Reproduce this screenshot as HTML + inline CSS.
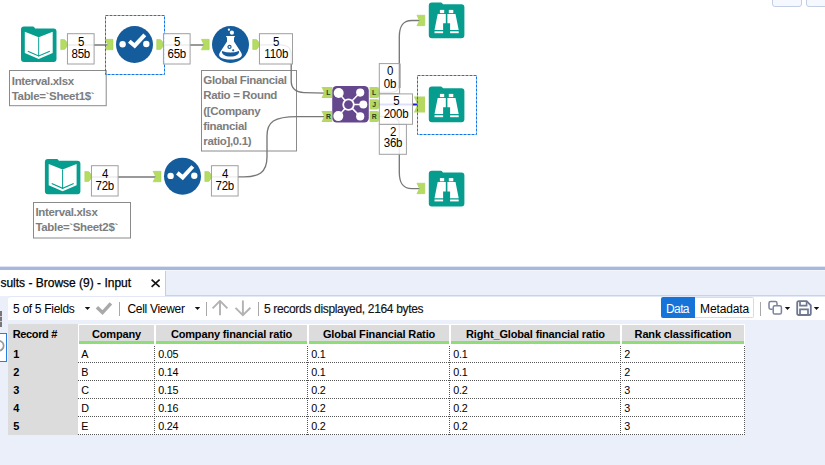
<!DOCTYPE html>
<html><head><meta charset="utf-8"><title>Workflow</title>
<style>
html,body{margin:0;padding:0;}
body{width:825px;height:465px;overflow:hidden;background:#fff;position:relative;font-family:"Liberation Sans",sans-serif;}
#canvas{position:absolute;left:0;top:0;width:825px;height:267px;}
#canvas text{font-family:"Liberation Sans",sans-serif;}
.lbl{font-size:11.5px;fill:#000;text-anchor:middle;letter-spacing:-0.25px;}
.ann{font-size:11.5px;font-weight:bold;fill:#7d7d7d;letter-spacing:-0.35px;}
.anc{font-size:6.8px;font-weight:bold;fill:#23402a;text-anchor:middle;}
#panel{position:absolute;left:0;top:266px;width:825px;height:199px;background:#eaeffa;}
.abs{position:absolute;}
.tb{font-size:12px;color:#000;white-space:nowrap;line-height:14px;}
.hd{position:absolute;top:59px;height:16px;background:#dcdcdc;border-bottom:3px solid #8fdd78;font-weight:bold;font-size:11px;letter-spacing:-0.15px;text-align:center;line-height:19px;color:#000;white-space:nowrap;}
.cell{position:absolute;height:18px;font-size:10.75px;line-height:20px;color:#000;letter-spacing:-0.2px;white-space:nowrap;}
.rn{position:absolute;left:13.3px;font-weight:bold;font-size:11px;line-height:20px;color:#000;}
.rh{font-weight:bold;font-size:11px;letter-spacing:-0.35px;line-height:15px;color:#000;white-space:nowrap;}
.vd{position:absolute;top:80px;width:1px;height:89px;background:repeating-linear-gradient(180deg,#555 0 1px,transparent 1px 2px);}
.hdot{position:absolute;left:78px;width:667px;height:1px;background:repeating-linear-gradient(90deg,#555 0 1px,transparent 1px 2px);}
</style></head><body>
<svg id="canvas" width="825" height="267" viewBox="0 0 825 267">
<defs>
<g id="book">
<path d="M0,3.6 Q0,0.6 3,0.6 H11.6 Q13,0.6 13.5,1.6 L14,2.5 H32.5 Q35.5,2.5 35.5,5.5 V33 Q35.5,36 32.5,36 H3 Q0,36 0,33 Z" fill="#069d8e"/>
<path d="M3.8,5.8 L17.7,11.3 L31.7,5.8 V27 L17.7,33 L3.8,27 Z" fill="#fff"/>
<path d="M17.7,11.3 V30.4" stroke="#069d8e" stroke-width="1" fill="none"/>
<path d="M6.8,25.2 L17.7,30 L28.8,25.2" stroke="#069d8e" stroke-width="1.1" fill="none"/>
</g>
<g id="select">
<circle cx="0" cy="0" r="18.5" fill="#145c9c"/>
<circle cx="-11.9" cy="-0.3" r="3.2" fill="#fff"/>
<circle cx="11.8" cy="-0.5" r="3.2" fill="#fff"/>
<path d="M-5.2,-3.3 L0.2,1.2 L10.3,-9.7" stroke="#fff" stroke-width="4" fill="none"/>
</g>
<g id="browse">
<path d="M0,3.4 Q0,0.4 3,0.4 H11.8 Q13.1,0.4 13.6,1.3 L14.2,2.1 H32.6 Q35.6,2.1 35.6,5.1 V33 Q35.6,36 32.6,36 H3 Q0,36 0,33 Z" fill="#069d8e"/>
<rect x="11.1" y="7.7" width="4.3" height="3.2" fill="#fff"/>
<rect x="20" y="7.7" width="4.5" height="3.2" fill="#fff"/>
<path d="M8.9,11.7 H17 V21 H14.3 V27.8 H5.7 Z" fill="#fff"/>
<path d="M18.6,11.7 H26.7 L29.9,27.8 H21.3 V21 H18.6 Z" fill="#fff"/>
<rect x="5.7" y="29.1" width="8.6" height="1.9" fill="#fff"/>
<rect x="21.3" y="29.1" width="8.6" height="1.9" fill="#fff"/>
</g>
<path id="ain" d="M-0.7,0 H7.2 V10.5 H-0.7 L1.8,5.25 Z" fill="#b4dc60" stroke="#a3cb50" stroke-width="0.5"/>
<path id="aout" d="M0,0.2 H3.6 Q6.3,1.6 6.3,5.2 Q6.3,8.8 3.6,10.2 H0 Z" fill="#b4dc60" stroke="#a3cb50" stroke-width="0.5"/>
</defs>

<!-- top-right buttons -->
<path d="M772.5,-1 V4 Q772.5,6.5 775,6.5 H799 Q801.5,6.5 801.5,4 V-1" fill="#f5f8fe" stroke="#c3cde6" stroke-width="1"/>
<path d="M806.5,-1 V4 Q806.5,6.5 809,6.5 H830 V-1 Z" fill="#f5f8fe" stroke="#c3cde6" stroke-width="1"/>

<!-- annotations -->
<g fill="#fff" stroke="#8a8a8a" stroke-width="1">
<rect x="9.5" y="70.5" width="96.7" height="35.2"/>
<rect x="33.5" y="202.5" width="97" height="35.5"/>
<rect x="201.5" y="70.5" width="95" height="80.5"/>
</g>
<g class="ann">
<text x="11.8" y="84.5">Interval.xlsx</text>
<text x="11.8" y="99.5">Table=`Sheet1$`</text>
<text x="35.5" y="216">Interval.xlsx</text>
<text x="35.5" y="230.6">Table=`Sheet2$`</text>
<text x="203.3" y="84.3">Global Financial</text>
<text x="203.3" y="99.4">Ratio = Round</text>
<text x="203.3" y="114.6">([Company</text>
<text x="203.3" y="129.8">financial</text>
<text x="203.3" y="145">ratio],0.1)</text>
</g>

<!-- connections -->
<g fill="none" stroke="#777" stroke-width="1.35">
<path d="M67,45 H109"/>
<path d="M163,45 H205"/>
<path d="M259,44.8 H280 C287,44.8 291.2,47 291.2,55 V81 C291.2,89 296,92.2 304,92.6 L325,93.2"/>
<path d="M91,177 H157"/>
<path d="M211,176.9 H244 C258,176.9 267,173 267,157 V136 C267,122 274,116.6 297,116.6 H325"/>
<path d="M379,92.5 H390 Q399.3,92.5 399.3,84 V37 C399.3,27 402,20.5 412,20.5 H421"/>
<path d="M379,116.5 H390 Q399.3,116.5 399.3,125 V172 C399.3,182 402,188.6 412,188.6 H421"/>
</g>
<path d="M379,104.6 H418" stroke="#1c1ce0" stroke-width="2" fill="none"/>

<!-- tools -->
<use href="#book" x="21" y="26"/>
<use href="#aout" x="60.7" y="39.3"/>
<use href="#ain" x="105.8" y="39.3"/>
<use href="#select" x="134.5" y="44.5"/>
<use href="#aout" x="156.7" y="39.3"/>
<use href="#ain" x="202" y="39.3"/>
<use href="#aout" x="252.7" y="39.3"/>

<!-- formula -->
<g transform="translate(230.5,44.5)">
<circle cx="0" cy="0" r="18.5" fill="#145c9c"/>
<circle cx="-1.6" cy="-14.8" r="1.1" fill="#fff"/>
<circle cx="1.4" cy="-11.8" r="2.1" fill="#fff"/>
<path d="M-4.3,-8.4 H4.3 V-7.3 H3.5 V-3 L10.6,8 C13.6,12.6 8,15 0,15 C-8,15 -13.6,12.6 -10.6,8 L-3.5,-3 V-7.3 H-4.3 Z" fill="#fff"/>
<path d="M-8.5,6.5 Q0,9.7 8.5,6.5 C9.3,9.6 5,12.1 0,12.1 C-5,12.1 -9.3,9.6 -8.5,6.5 Z" fill="#145c9c"/>
<circle cx="-1" cy="2.4" r="1.55" fill="none" stroke="#145c9c" stroke-width="1.2"/>
<circle cx="2.7" cy="5.8" r="1.1" fill="#145c9c"/>
</g>

<!-- lower row -->
<use href="#book" x="44.9" y="158.3"/>
<use href="#aout" x="84.8" y="171.3"/>
<use href="#ain" x="153.8" y="171.3"/>
<use href="#select" x="182.5" y="176.2"/>
<use href="#aout" x="204.8" y="171.3"/>

<!-- join -->
<g>
<rect x="332.2" y="86" width="36.6" height="36.6" rx="4.5" fill="#65478e"/>
<g stroke="#fff" stroke-width="1.5" fill="none">
<path d="M348.5,104.6 L338.7,93 M348.5,104.6 L360.2,92.5 M348.5,104.6 H363.3 M348.5,104.6 L338.3,116.2 M348.5,104.6 L360.2,116.4"/>
</g>
<circle cx="348.5" cy="104.6" r="5.3" fill="#65478e" stroke="#fff" stroke-width="1.8"/>
<circle cx="338.7" cy="93" r="5" fill="#fff"/>
<circle cx="360.2" cy="92.6" r="4.1" fill="#fff"/>
<circle cx="363.3" cy="104.6" r="4" fill="#fff"/>
<circle cx="338.3" cy="116.1" r="5" fill="#fff"/>
<circle cx="360.2" cy="116.4" r="4.1" fill="#fff"/>
<path d="M321.5,87 H332.2 V98 H321.5 L324,92.5 Z" fill="#b4d862"/>
<path d="M321.5,111 H332.2 V122 H321.5 L324,116.5 Z" fill="#b4d862"/>
<path d="M369.6,87 H377 Q379,87 379,89 V96 Q379,98 377,98 H369.6 Z" fill="#b4d862"/>
<path d="M369.6,99.3 H377 Q379,99.3 379,101 V107.6 Q379,109.4 377,109.4 H369.6 Z" fill="#b4d862"/>
<path d="M369.6,111 H377 Q379,111 379,113 V120 Q379,122 377,122 H369.6 Z" fill="#b4d862"/>
<text class="anc" x="328.4" y="95.3">L</text>
<text class="anc" x="328.4" y="119.3">R</text>
<text class="anc" x="374.2" y="95.3">L</text>
<text class="anc" x="374.2" y="107.2">J</text>
<text class="anc" x="374.2" y="119.3">R</text>
</g>

<!-- browses -->
<use href="#browse" x="428.8" y="2.2"/>
<use href="#ain" x="417.6" y="15.2"/>
<use href="#browse" x="428.8" y="86.2"/>
<path d="M413.9,96.5 H425 V112.6 H413.9 L417.3,104.6 Z" fill="#b4d862"/>
<use href="#browse" x="428.8" y="170.4"/>
<use href="#ain" x="417.6" y="183.2"/>

<!-- selection boxes -->
<rect x="105.5" y="15.5" width="59" height="59" fill="none" stroke="#0f78e4" stroke-width="1" stroke-dasharray="3,1"/>
<rect x="417.5" y="75.5" width="59" height="59" fill="none" stroke="#0f78e4" stroke-width="1" stroke-dasharray="3,1"/>

<!-- labels -->
<g fill="#fff" fill-opacity="0.86" stroke="#a0a0a0" stroke-width="1">
<rect x="67.45" y="33.7" width="26.65" height="30.3"/>
<rect x="163.45" y="33.7" width="26.65" height="30.3"/>
<rect x="259.45" y="33.7" width="33.05" height="30.3"/>
<rect x="91.45" y="165.7" width="26.65" height="30.3"/>
<rect x="211.45" y="165.7" width="26.65" height="30.3"/>
<rect x="379.3" y="63.6" width="20.3" height="30.3"/>
<rect x="379.3" y="124.3" width="27.1" height="30"/>
<rect x="379.3" y="93.9" width="33.2" height="30.4"/>
</g>
<path d="M399.7,63.6 V88" stroke="#9c9c9c" stroke-width="1.9" fill="none"/>
<g class="lbl">
<text transform="translate(81,45.9) scale(1,1.1)">5</text><text transform="translate(80.8,57.9) scale(1,1.1)">85b</text>
<text transform="translate(177,45.9) scale(1,1.1)">5</text><text transform="translate(176.8,57.9) scale(1,1.1)">65b</text>
<text transform="translate(276.1,45.9) scale(1,1.1)">5</text><text transform="translate(276.2,57.9) scale(1,1.1)">110b</text>
<text transform="translate(105,177.9) scale(1,1.1)">4</text><text transform="translate(104.8,189.9) scale(1,1.1)">72b</text>
<text transform="translate(225,177.9) scale(1,1.1)">4</text><text transform="translate(224.8,189.9) scale(1,1.1)">72b</text>
<text transform="translate(390.1,74.8) scale(1,1.1)">0</text><text transform="translate(389.9,87.9) scale(1,1.1)">0b</text>
<text transform="translate(396.3,105.4) scale(1,1.1)">5</text><text transform="translate(396,118.1) scale(1,1.1)">200b</text>
<text transform="translate(393,135.6) scale(1,1.1)">2</text><text transform="translate(393,147.4) scale(1,1.1)">36b</text>
</g>
</svg>

<div id="panel">
<div class="abs" style="left:0;top:0;width:825px;height:1px;background:#dfe5f4;"></div>
<div class="abs" style="left:0;top:1px;width:825px;height:3px;background:#a8b7dc;"></div>
<div class="abs" style="left:165px;top:4px;width:660px;height:1px;background:#f4f6fc;"></div>
<div class="abs" style="left:0;top:4px;width:165px;height:26px;background:#fff;"></div>
<div class="abs" style="left:165px;top:5px;width:660px;height:25px;border-left:1px solid #c3cde8;border-bottom:1px solid #c9d2ea;box-sizing:border-box;"></div>
<div class="abs tb" style="left:0.4px;top:10px;font-size:12px;color:#000;-webkit-text-stroke:0.25px #000;">sults - Browse (9) - Input</div>
<svg class="abs" style="left:150px;top:12px;" width="11" height="11" viewBox="0 0 11 11"><path d="M1.6,1.6 L9.6,8.8 M9.6,1.6 L1.6,8.8" stroke="#111" stroke-width="1.6" fill="none"/></svg>
<!-- toolbar -->
<div class="abs" style="left:8px;top:30px;width:817px;height:24px;background:#fff;border-top:1px solid #e3e8f6;box-sizing:border-box;border-top-left-radius:3px;"></div>
<div class="abs" style="left:0;top:30px;width:8px;height:169px;background:#eaeffa;"></div>
<div class="abs tb" style="left:13px;top:36px;letter-spacing:-0.3px;">5 of 5 Fields</div>
<svg class="abs" style="left:84px;top:40px;" width="7" height="5" viewBox="0 0 7 5"><path d="M0.8,1 H6.2 L3.5,4 Z" fill="#111"/></svg>
<svg class="abs" style="left:95px;top:35px;" width="18" height="15" viewBox="0 0 18 15"><path d="M1.9,6.3 L7.5,11.6 L15.9,2.3" stroke="#a9a9a9" stroke-width="3.4" fill="none"/></svg>
<div class="abs" style="left:119px;top:36px;width:1px;height:14px;background:#a8a8a8;"></div>
<div class="abs tb" style="left:127.5px;top:36px;letter-spacing:-0.3px;">Cell Viewer</div>
<svg class="abs" style="left:194px;top:40px;" width="7" height="5" viewBox="0 0 7 5"><path d="M0.8,1 H6.2 L3.5,4 Z" fill="#111"/></svg>
<div class="abs" style="left:205.5px;top:36px;width:1px;height:14px;background:#a8a8a8;"></div>
<svg class="abs" style="left:211px;top:34px;" width="18" height="17" viewBox="0 0 18 17"><path d="M9,15.3 V1.2 M1.6,8.4 L9,0.9 L16.4,8.4" stroke="#b2b2b2" stroke-width="1.9" fill="none"/></svg>
<svg class="abs" style="left:234px;top:34px;" width="18" height="17" viewBox="0 0 18 17"><path d="M8.9,0.6 V15 M1.5,7.8 L8.9,15.2 L16.4,7.8" stroke="#b2b2b2" stroke-width="1.9" fill="none"/></svg>
<div class="abs" style="left:258px;top:36px;width:1px;height:14px;background:#a8a8a8;"></div>
<div class="abs tb" style="left:264px;top:36px;letter-spacing:-0.33px;color:#111;-webkit-text-stroke:0.15px #111;">5 records displayed, 2164 bytes</div>
<!-- Data / Metadata -->
<div class="abs" style="left:661px;top:31px;width:34px;height:21px;background:#1673d8;border-radius:2px 0 0 2px;"></div>
<div class="abs tb" style="left:666px;top:36px;color:#fff;letter-spacing:-0.6px;">Data</div>
<div class="abs" style="left:695px;top:31px;width:59px;height:21px;background:#fff;border:1px solid #d5dcf0;border-left:none;box-sizing:border-box;border-radius:0 2px 2px 0;"></div>
<div class="abs tb" style="left:700px;top:36px;color:#000;letter-spacing:-0.12px;">Metadata</div>
<div class="abs" style="left:760px;top:36px;width:1px;height:14px;background:#a8a8a8;"></div>
<svg class="abs" style="left:767px;top:34px;" width="16" height="15" viewBox="0 0 16 15"><path d="M5.6,9.2 H3.6 Q2,9.2 2,7.6 V3.2 Q2,1.6 3.6,1.6 H8.4 Q10,1.6 10,3.2 V5" stroke="#79839c" stroke-width="1.5" fill="none"/><rect x="6.2" y="5.8" width="8.2" height="8.2" rx="1.6" stroke="#79839c" stroke-width="1.5" fill="none"/></svg>
<svg class="abs" style="left:783.5px;top:40px;" width="7" height="5" viewBox="0 0 7 5"><path d="M0.8,1 H6.2 L3.5,4 Z" fill="#111"/></svg>
<svg class="abs" style="left:795px;top:33px;" width="18" height="18" viewBox="0 0 18 18"><path d="M3.8,2.2 H11.6 L15.8,6.4 V14.4 Q15.8,16 14.2,16 H3.8 Q2.2,16 2.2,14.4 V3.8 Q2.2,2.2 3.8,2.2 Z" stroke="#6d7791" stroke-width="1.8" fill="none"/><path d="M5,2.6 V6.6 H11.6 V2.6 M5,15.6 V10.4 H13 V15.6" stroke="#6d7791" stroke-width="1.7" fill="none"/></svg>
<svg class="abs" style="left:812.5px;top:40px;" width="7" height="5" viewBox="0 0 7 5"><path d="M0.8,1 H6.2 L3.5,4 Z" fill="#111"/></svg>
<!-- left strip icons -->
<div class="abs" style="left:0;top:45px;width:1.5px;height:16px;background:repeating-linear-gradient(180deg,#777 0 4.5px,#c8c8c8 4.5px 5.5px);"></div>
<div class="abs" style="left:-2px;top:67px;width:7px;height:27px;background:#fff;border:1px solid #2a7de1;box-sizing:content-box;"></div>
<svg class="abs" style="left:0;top:72px;" width="6" height="16" viewBox="0 0 6 16"><path d="M-1,2.5 Q4.2,4 3.6,8.5 Q3,12 -1,13" stroke="#9a9a9a" stroke-width="1.6" fill="none"/></svg>
<!-- table -->
<div class="abs" style="left:8px;top:58px;width:70px;height:111px;background:#dcdcdc;"></div>
<div class="abs" style="left:78px;top:58px;width:667px;height:111px;background:#fff;"></div>
<div class="abs rh" style="left:12.7px;top:61px;">Record #</div>
<div class="hd" style="left:79px;width:75px;">Company</div>
<div class="hd" style="left:156px;width:151px;">Company financial ratio</div>
<div class="hd" style="left:309px;width:140px;">Global Financial Ratio</div>
<div class="hd" style="left:451px;width:169px;">Right_Global financial ratio</div>
<div class="hd" style="left:622px;width:122px;">Rank classification</div>
<div class="vd" style="left:154px;"></div>
<div class="vd" style="left:307px;"></div>
<div class="vd" style="left:449px;"></div>
<div class="vd" style="left:620px;"></div>
<div class="vd" style="left:744px;"></div>
<div class="hdot" style="top:96px;"></div>
<div class="rn" style="top:78px;">1</div>
<div class="cell" style="left:81.2px;top:78px;">A</div>
<div class="cell" style="left:158.2px;top:78px;">0.05</div>
<div class="cell" style="left:311.2px;top:78px;">0.1</div>
<div class="cell" style="left:453.2px;top:78px;">0.1</div>
<div class="cell" style="left:624.2px;top:78px;">2</div>
<div class="hdot" style="top:114px;"></div>
<div class="rn" style="top:96px;">2</div>
<div class="cell" style="left:81.2px;top:96px;">B</div>
<div class="cell" style="left:158.2px;top:96px;">0.14</div>
<div class="cell" style="left:311.2px;top:96px;">0.1</div>
<div class="cell" style="left:453.2px;top:96px;">0.1</div>
<div class="cell" style="left:624.2px;top:96px;">2</div>
<div class="hdot" style="top:132px;"></div>
<div class="rn" style="top:114px;">3</div>
<div class="cell" style="left:81.2px;top:114px;">C</div>
<div class="cell" style="left:158.2px;top:114px;">0.15</div>
<div class="cell" style="left:311.2px;top:114px;">0.2</div>
<div class="cell" style="left:453.2px;top:114px;">0.2</div>
<div class="cell" style="left:624.2px;top:114px;">3</div>
<div class="hdot" style="top:150px;"></div>
<div class="rn" style="top:132px;">4</div>
<div class="cell" style="left:81.2px;top:132px;">D</div>
<div class="cell" style="left:158.2px;top:132px;">0.16</div>
<div class="cell" style="left:311.2px;top:132px;">0.2</div>
<div class="cell" style="left:453.2px;top:132px;">0.2</div>
<div class="cell" style="left:624.2px;top:132px;">3</div>
<div class="hdot" style="top:168px;"></div>
<div class="rn" style="top:150px;">5</div>
<div class="cell" style="left:81.2px;top:150px;">E</div>
<div class="cell" style="left:158.2px;top:150px;">0.24</div>
<div class="cell" style="left:311.2px;top:150px;">0.2</div>
<div class="cell" style="left:453.2px;top:150px;">0.2</div>
<div class="cell" style="left:624.2px;top:150px;">3</div>
</div>
</body></html>
